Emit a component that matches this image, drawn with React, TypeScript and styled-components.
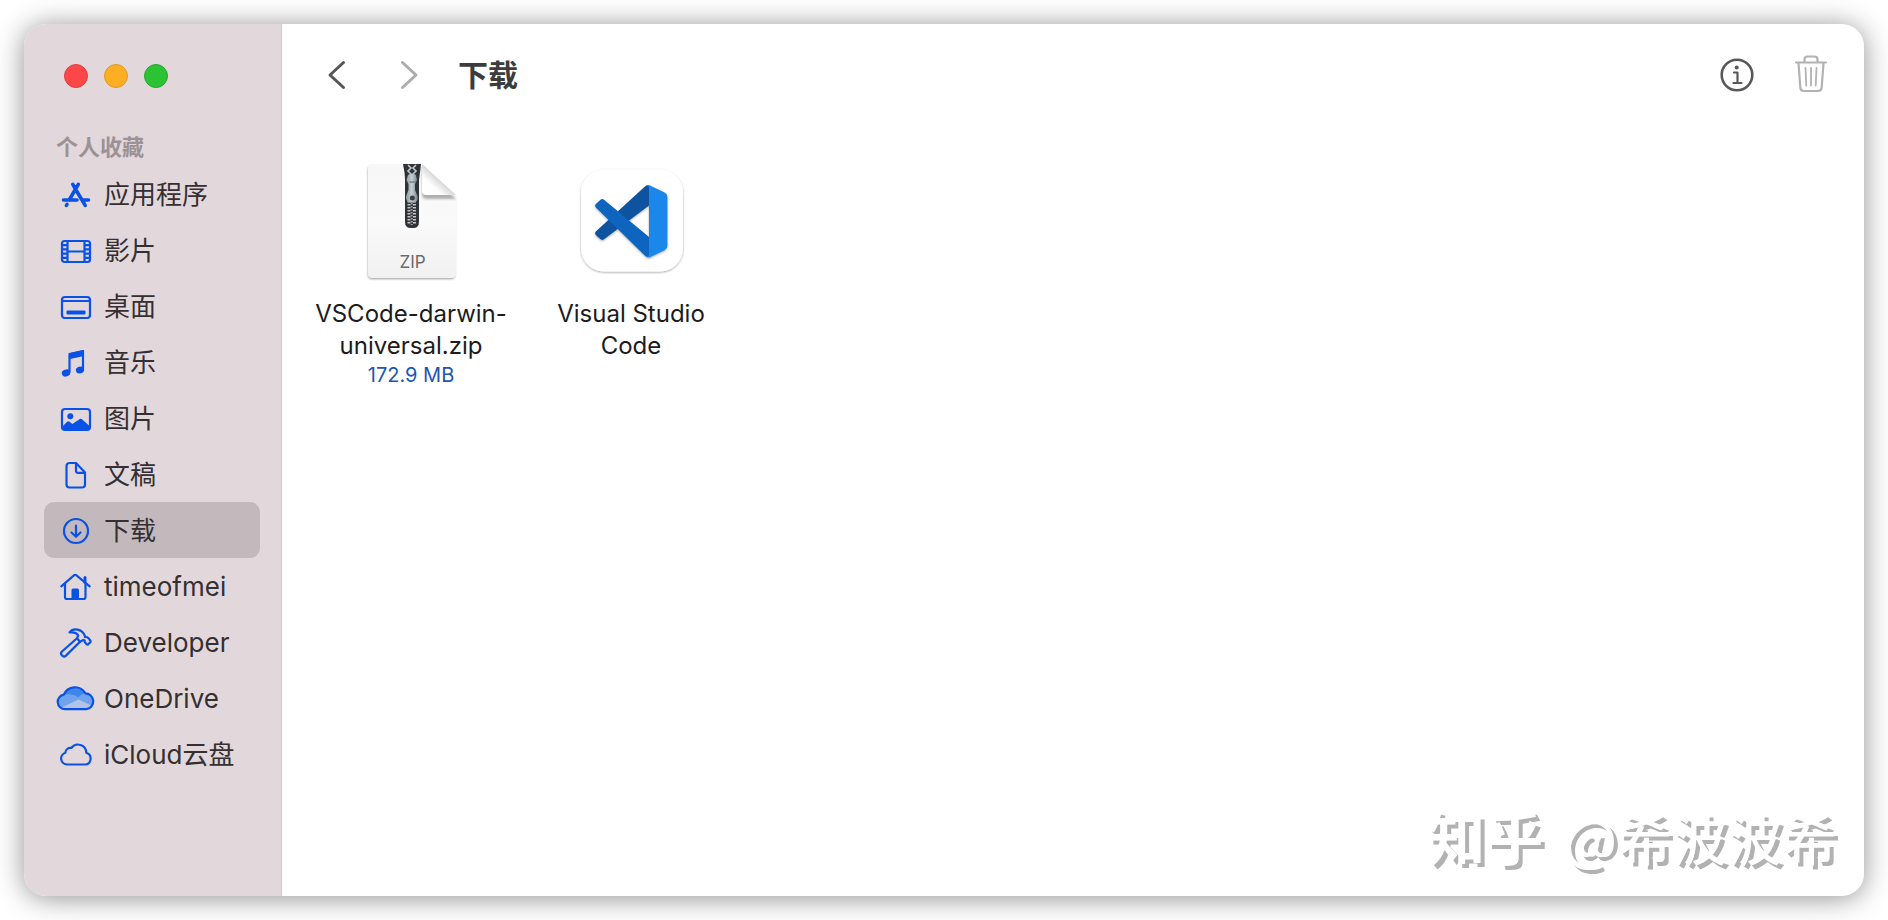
import React from 'react';
import styled, { createGlobalStyle } from 'styled-components';

const GlobalStyle = createGlobalStyle`
  *, *::before, *::after { box-sizing: border-box; }
  body {
    margin: 0;
    background: #fff;
    font-family: Inter, "Noto Sans CJK SC", sans-serif;
    -webkit-font-smoothing: antialiased;
  }
  button { border: 0; padding: 0; background: none; font: inherit; }
  ul { list-style: none; margin: 0; padding: 0; }
`;

const Desktop = styled.div`
  display: flex;
  min-height: 100vh;
  padding: 24px;
`;

const Window = styled.div`
  position: relative;
  display: flex;
  flex: 1;
  border-radius: 22px;
  overflow: hidden;
  background: #fff;
  box-shadow: 0 2px 28px rgba(0, 0, 0, 0.44);
`;

const Sidebar = styled.aside`
  flex: 0 0 258px;
  padding: 40px 21px 0 20px;
  background: #e2d8db;
  border-right: 1px solid #cfc8cb;
`;

const Lights = styled.div`
  display: flex;
  gap: 16px;
  padding-left: 20px;
`;

const Light = styled.button<{ $color: string; $edge: string }>`
  width: 24px;
  height: 24px;
  border-radius: 50%;
  background: ${(p) => p.$color};
  border: 1px solid ${(p) => p.$edge};
`;

const SectionTitle = styled.h2`
  margin: 42px 0 0;
  padding: 0 0 2px 12px;
  font-size: 22px;
  line-height: 34px;
  font-weight: 700;
  color: #9c9295;
`;

const Place = styled.a<{ $active?: boolean }>`
  display: flex;
  align-items: center;
  gap: 10px;
  height: 56px;
  padding-left: 12px;
  border-radius: 10px;
  font-size: 26px;
  line-height: 36px;
  white-space: nowrap;
  color: #352f31;
  text-decoration: none;
  background: ${(p) => (p.$active ? '#c3b9bc' : 'transparent')};
`;

const PlaceName = styled.span`
  padding-top: 2px;
`;

const PlaceIcon = styled.svg`
  flex: none;
  width: 38px;
  height: 38px;
  overflow: visible;
  fill: none;
  stroke: #0a52e6;
  stroke-width: 2.2;
  stroke-linecap: round;
  stroke-linejoin: round;
`;

const Main = styled.main`
  display: flex;
  flex: 1;
  flex-direction: column;
  min-width: 0;
`;

const Toolbar = styled.header`
  display: flex;
  align-items: center;
  gap: 24px;
  height: 102px;
  padding: 0 29px 0 31px;
`;

const ToolButton = styled.button`
  display: grid;
  place-items: center;
  width: 48px;
  height: 48px;
`;

const Actions = styled.div`
  display: flex;
  gap: 26px;
`;

const Title = styled.h1`
  flex: 1;
  margin: 0;
  padding-left: 1px;
  font-size: 30px;
  line-height: 44px;
  font-weight: 700;
  color: #3c3c3c;
`;

const Files = styled.ul`
  display: flex;
  flex-wrap: wrap;
  gap: 20px;
  padding: 32px 29px;
`;

const FileItem = styled.li`
  display: flex;
  flex-direction: column;
  align-items: center;
  width: 200px;
  text-align: center;
`;

const FileIcon = styled.svg`
  width: 128px;
  height: 128px;
  margin-bottom: 12px;
`;

const FileName = styled.span`
  font-size: 24px;
  line-height: 32px;
  color: #1c1c1c;
`;

const FileSize = styled.span`
  font-size: 20px;
  line-height: 26px;
  color: #1e56b4;
`;

const Watermark = styled.p`
  position: absolute;
  right: 27px;
  bottom: 20px;
  margin: 0;
  font-family: "Noto Sans CJK SC", sans-serif;
  font-size: 55px;
  line-height: 80px;
  font-weight: 500;
  color: #fff;
  text-shadow: 4px 4px 0 #b2b2b2;
`;

const Brand = styled.span`
  margin-right: 8px;
  font-size: 58px;
  font-weight: 700;
`;

const AppsIcon = () => (
  <PlaceIcon viewBox="0 0 38 38">
    <g strokeWidth="3.6">
      <path d="M7.5 25H21M27.5 25h5M22.3 9.3 13.2 25M16.8 9.3l2.4 4.2M20.6 16l8.6 14.4M11 29.4l-.6 1" />
    </g>
  </PlaceIcon>
);

const FilmIcon = () => (
  <PlaceIcon viewBox="0 0 38 38">
    <rect x="6" y="10" width="28" height="21" rx="2.5" />
    <path d="M11.5 10v21M28.5 10v21M11.5 20.500h17" />
    <path d="M6 14.200h5M6 18.400h5M6 22.600h5M6 26.800h5M29 14.200h5M29 18.400h5M29 22.600h5M29 26.800h5" strokeLinecap="butt" />
  </PlaceIcon>
);

const DesktopIcon = () => (
  <PlaceIcon viewBox="0 0 38 38">
    <rect x="6" y="10" width="28" height="21" rx="3" />
    <path d="M6 14h28" />
    <rect x="10.500" y="23.500" width="19" height="4" rx="1" fill="#0a52e6" stroke="none" />
  </PlaceIcon>
);

const MusicIcon = () => (
  <PlaceIcon viewBox="0 0 38 38">
    <path d="M13.500 29V11L27 8v18" />
    <path d="M13 10.200 28 7v6l-15 3.200z" fill="#0a52e6" stroke="none" />
    <ellipse cx="10" cy="30" rx="4.300" ry="3.500" fill="#0a52e6" stroke="none" transform="rotate(-18 10 30)" />
    <ellipse cx="24" cy="27" rx="4.200" ry="3.400" fill="#0a52e6" stroke="none" transform="rotate(-18 24 27)" />
  </PlaceIcon>
);

const PictureIcon = () => (
  <PlaceIcon viewBox="0 0 38 38">
    <rect x="6" y="10" width="28" height="21" rx="3" />
    <path d="M6.500 27.500 11 22.800q1.300-1.200 2.600 0l2.700 2.300 6.800-4.700q1.600-1.100 3.200.1l7.300 6.500v2.500q0 1.500-1.500 1.500H8q-1.500 0-1.500-1.500z" fill="#0a52e6" stroke="none" />
    <circle cx="14.300" cy="17.300" r="3" fill="#0a52e6" stroke="none" />
  </PlaceIcon>
);

const DocumentIcon = () => (
  <PlaceIcon viewBox="0 0 38 38">
    <path d="M20 8h-6.500a3 3 0 0 0-3 3v18.500a3 3 0 0 0 3 3h12.500a3 3 0 0 0 3-3V17.500zV16a1.800 1.800 0 0 0 1.800 1.800H29" />
  </PlaceIcon>
);

const DownloadIcon = () => (
  <PlaceIcon viewBox="0 0 38 38">
    <circle cx="20" cy="20" r="12" />
    <path d="M20 14.500v11M15.500 21.500l4.500 4.200 4.500-4.200" />
  </PlaceIcon>
);

const HomeIcon = () => (
  <PlaceIcon viewBox="0 0 38 38">
    <path d="M5.300 19.300 18.200 8.200q1-.8 2 0l13.500 11.100" />
    <path d="M9 16.800V30q0 2 2 2h16.500q2 0 2-2V16.800" />
    <path d="M29 10.500v5" strokeWidth="3" />
    <path d="M15.500 32V23q0-1.500 1.500-1.500h4.500Q23 21.500 23 23v9z" fill="#0a52e6" stroke="none" />
  </PlaceIcon>
);

const HammerIcon = () => (
  <PlaceIcon viewBox="0 0 38 38">
    <path d="M21 15.300 5.700 28.800q-1.500 1.600 0 3.200l.9.900q1.600 1.500 3.100 0L24 18.700" />
    <path d="M13.500 9.400Q16.500 5.600 21.500 6.600q5.300 1.100 7.200 5.900l.3 1.600q2-.4 3.300.9l2.200 2.700q.5 1-.3 1.700l-2 1.900q-.9.700-1.700-.2l-1.900-2.400.1-1.200-1.300-.6-3.400 1.800L21 15.300l1.200-2.600q-1.400-4-8.700-3.300z" />
  </PlaceIcon>
);

const OneDriveIcon = () => (
  <PlaceIcon viewBox="0 0 38 38">
    <path d="M9 30.200a7.300 7.300 0 0 1-1.200-14.500A12 12 0 0 1 29.300 14.300 8 8 0 0 1 30.500 30.200z" fill="#6fa3ee" stroke="none" />
    <path d="M8 15.700A12 12 0 0 1 29.300 14.300Q25 14.500 22.500 18.500q-6-4.300-14.500-2.800z" fill="#3f86ea" stroke="none" />
    <path d="M5 28.800 22.500 20.500l13.500 6.300q-2 3.400-5.500 3.400H9q-2.300 0-4-1.400z" fill="#b3c3e6" stroke="none" />
    <path d="M9 30.200a7.300 7.300 0 0 1-1.200-14.500A12 12 0 0 1 29.300 14.300 8 8 0 0 1 30.500 30.200z" />
  </PlaceIcon>
);

const CloudIcon = () => (
  <PlaceIcon viewBox="0 0 38 38">
    <path d="M11 29.500a6 6 0 0 1-1.700-11.700 5 5 0 0 1 6-4.800A8.300 8.300 0 0 1 30.300 17.800 6 6 0 0 1 29.500 29.500z" />
  </PlaceIcon>
);

const ZipIcon = () => (
  <FileIcon viewBox="347 157 128 128" role="img" aria-label="ZIP">
    <defs>
      <linearGradient id="paper" x1="0" y1="0" x2="0" y2="1">
        <stop offset="0" stopColor="#f7f7f7" />
        <stop offset="0.500" stopColor="#fafafa" />
        <stop offset="1" stopColor="#f1f1f1" />
      </linearGradient>
      <linearGradient id="fold" x1="0" y1="1" x2="1" y2="0">
        <stop offset="0" stopColor="#ffffff" />
        <stop offset="0.300" stopColor="#fdfdfd" />
        <stop offset="0.520" stopColor="#d4d4d4" />
      </linearGradient>
      <linearGradient id="pull" x1="0" y1="0" x2="1" y2="0">
        <stop offset="0" stopColor="#8c979e" />
        <stop offset="0.500" stopColor="#c4ced4" />
        <stop offset="1" stopColor="#78838a" />
      </linearGradient>
      <filter id="soft" x="-20%" y="-20%" width="140%" height="140%">
        <feGaussianBlur stdDeviation="1" />
      </filter>
    </defs>
    <path d="M372 165h50l33 33v76q0 4-4 4h-79q-4 0-4-4v-105q0-4 4-4z" fill="#808080" opacity="0.800" filter="url(#soft)" />
    <path d="M372 163h50l34 33v77q0 4-4 4h-80q-4 0-4-4v-106q0-4 4-4z" fill="url(#paper)" />
    <path d="M422 165v29q0 4 5 4h29z" fill="#b0b0b0" filter="url(#soft)" />
    <path d="M422 163v27q0 4 4 4h30z" fill="url(#fold)" />
    <path d="M403 163h18q-1 9-2 16v42q0 6-6 6h-2q-6 0-6-6v-42q0-7-2-16z" fill="#2f3336" />
    <path d="M408 164l3 3-3 3 3 3M416 164l-3 3 3 3-3 3" fill="none" stroke="#c2c7ca" strokeWidth="1.600" />
    <path d="M409 200v24M414.500 200v24" stroke="#c2c7ca" strokeWidth="3" strokeDasharray="1.600 1.400" />
    <path d="M411.700 202v22" stroke="#9ba2a6" strokeWidth="2" strokeDasharray="1.400 1.600" />
    <path d="M408 174q4-3 8 0l1 5-2 4v6l2.500 6q1 5-2.500 6-3 1-6 0-3.500-1-3-6l2.500-6v-6l-2-4z" fill="url(#pull)" />
    <circle cx="412.300" cy="197" r="2.500" fill="#3c4144" />
    <path d="M409.500 181h6" stroke="#5a6469" strokeWidth="1" />
    <text x="412.500" y="267" textAnchor="middle" fontFamily="Inter, sans-serif" fontSize="17" fill="#6b6b6b">ZIP</text>
  </FileIcon>
);

const CodeIcon = () => (
  <FileIcon viewBox="567 157 128 128" role="img" aria-label="Visual Studio Code">
    <defs>
      <filter id="tileShadow" x="-20%" y="-20%" width="140%" height="140%">
        <feDropShadow dx="0" dy="1" stdDeviation="1" floodColor="#000" floodOpacity="0.350" />
      </filter>
    </defs>
    <rect x="581" y="168.500" width="102" height="102" rx="23" fill="#fff" filter="url(#tileShadow)" />
    <g filter="url(#tileShadow)">
      <path d="M649 184.500v20L604 238.200q-2 1.400-3.700-.1l-4.200-3.800q-2-2 0-4L645 185.500q1.800-1.800 4-1z" fill="#0a539f" />
      <path d="M596.100 206.700q-2-2 0-4l4.200-3.800q1.700-1.500 3.700-.1L649 236v20q-2.200.5-4-1.300z" fill="#0f65bf" />
      <path d="M646 184.700q1.800-1.200 4-.3l14.600 7q2.800 1.400 2.800 4.400v49q0 3-2.800 4.400l-14.600 7q-2.500.9-4.500-1 3.500 2.300 3.500-2v-66q0-4-3-2.500z" fill="#1f87ea" />
    </g>
  </FileIcon>
);

const places = [
  { name: '应用程序', Icon: AppsIcon },
  { name: '影片', Icon: FilmIcon },
  { name: '桌面', Icon: DesktopIcon },
  { name: '音乐', Icon: MusicIcon },
  { name: '图片', Icon: PictureIcon },
  { name: '文稿', Icon: DocumentIcon },
  { name: '下载', Icon: DownloadIcon, active: true },
  { name: 'timeofmei', Icon: HomeIcon },
  { name: 'Developer', Icon: HammerIcon },
  { name: 'OneDrive', Icon: OneDriveIcon },
  { name: 'iCloud云盘', Icon: CloudIcon },
];

export default function App() {
  return (
    <>
      <GlobalStyle />
      <Desktop>
        <Window>
          <Sidebar>
            <Lights>
              <Light $color="#fd4648" $edge="#dd4245" aria-label="关闭" />
              <Light $color="#fdae22" $edge="#dc9a2a" aria-label="最小化" />
              <Light $color="#2bc233" $edge="#2ba535" aria-label="缩放" />
            </Lights>
            <SectionTitle>个人收藏</SectionTitle>
            <nav>
              <ul>
                {places.map(({ name, Icon, active }) => (
                  <li key={name}>
                    <Place href="#" $active={active} aria-current={active ? 'page' : undefined}>
                      <Icon />
                      <PlaceName>{name}</PlaceName>
                    </Place>
                  </li>
                ))}
              </ul>
            </nav>
          </Sidebar>
          <Main>
            <Toolbar>
              <ToolButton aria-label="后退">
                <svg width="20" height="30" viewBox="0 0 20 30" fill="none" stroke="#555" strokeWidth="3" strokeLinecap="round" strokeLinejoin="round">
                  <path d="M16.500 2.500 3 15l13.500 12.500" />
                </svg>
              </ToolButton>
              <ToolButton aria-label="前进">
                <svg width="20" height="30" viewBox="0 0 20 30" fill="none" stroke="#adadad" strokeWidth="3" strokeLinecap="round" strokeLinejoin="round">
                  <path d="M3.500 2.500 17 15 3.500 27.500" />
                </svg>
              </ToolButton>
              <Title>下载</Title>
              <Actions>
                <ToolButton aria-label="显示简介">
                  <svg width="36" height="36" viewBox="0 0 36 36" fill="none" stroke="#585858" strokeWidth="2.600" strokeLinecap="round" strokeLinejoin="round">
                    <circle cx="18" cy="18" r="15.300" />
                    <circle cx="17.700" cy="10.500" r="2" fill="#585858" stroke="none" />
                    <path d="M15 15.500h3.500V26M14.500 26h8" strokeWidth="2.200" />
                  </svg>
                </ToolButton>
                <ToolButton aria-label="移到废纸篓">
                  <svg width="36" height="40" viewBox="0 0 36 40" fill="none" stroke="#b2b2b2" strokeWidth="2.200" strokeLinecap="round" strokeLinejoin="round">
                    <path d="M3 7.500h30M11.500 7V4.500q0-3 3-3h7q3 0 3 3V7M5.500 8l1.800 24.500q.2 3.500 3.700 3.500h14q3.500 0 3.700-3.500L30.500 8" />
                    <path d="m12.500 13 .8 17.500M18 13v17.500M23.500 13l-.8 17.500" strokeWidth="1.800" />
                  </svg>
                </ToolButton>
              </Actions>
            </Toolbar>
            <Files>
              <FileItem>
                <ZipIcon />
                <FileName>VSCode-darwin-universal.zip</FileName>
                <FileSize>172.9 MB</FileSize>
              </FileItem>
              <FileItem>
                <CodeIcon />
                <FileName>Visual Studio Code</FileName>
              </FileItem>
            </Files>
          </Main>
          <Watermark>
            <Brand>知乎</Brand> @希波波希
          </Watermark>
        </Window>
      </Desktop>
    </>
  );
}
